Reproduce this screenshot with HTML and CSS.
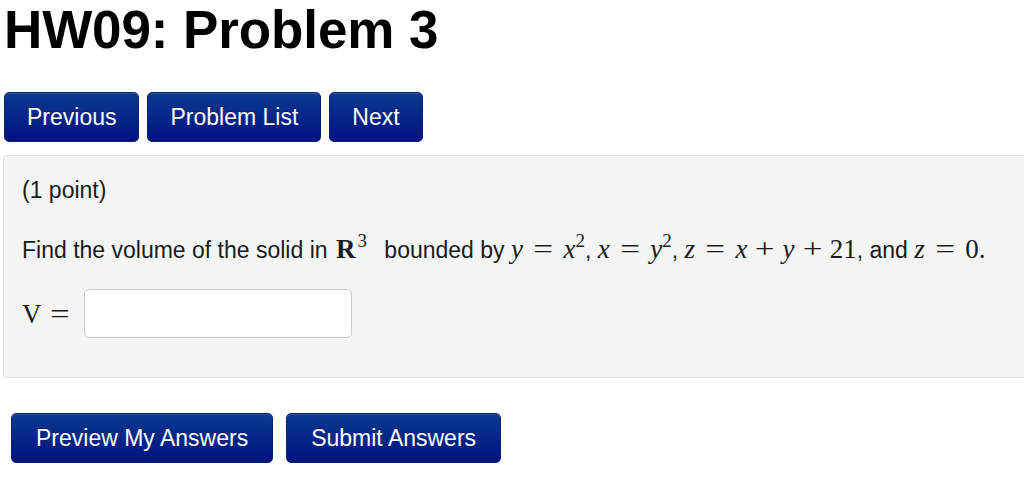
FILE: index.html
```html
<!DOCTYPE html>
<html>
<head>
<meta charset="utf-8">
<link rel="stylesheet" href="styles.css">
</head>
<body>
<div class="page">
  <h1 class="title">HW09: Problem 3</h1>
  <div class="nav">
    <span class="btn">Previous</span>
    <span class="btn">Problem List</span>
    <span class="btn">Next</span>
  </div>
  <div class="problem">
    <p class="points">(1 point)</p>
    <p class="question">Find the volume of the solid in <span class="m rr"><b class="bb">R</b><sup>3</sup></span> bounded by <span class="m"><i>y</i><span class="rel">=</span><i>x</i><sup>2</sup></span>, <span class="m"><i>x</i><span class="rel">=</span><i>y</i><sup>2</sup></span>, <span class="m"><i>z</i><span class="rel">=</span><i>x</i><span class="bin">+</span><i>y</i><span class="bin">+</span>21</span>, and <span class="m"><i>z</i><span class="rel">=</span>0.</span></p>
    <div class="answer">
      <span class="m label">V<span class="rel">=</span></span>
      <span class="input"></span>
    </div>
  </div>
  <div class="submit">
    <span class="btn wide">Preview My Answers</span>
    <span class="btn wide">Submit Answers</span>
  </div>
</div>
</body>
</html>
```
FILE: styles.css
```css
html, body {
  margin: 0;
  padding: 0;
  background: #fff;
}
.page {
  padding-left: 3px;
  font-family: "Liberation Sans", Arial, sans-serif;
  color: #1a1a1a;
}
.title {
  margin: 0;
  font-size: 53px;
  line-height: 60px;
  font-weight: bold;
  letter-spacing: -0.1px;
  color: #000;
  padding-left: 1px;
}
.nav {
  display: flex;
  gap: 8px;
  margin-top: 32px;
  padding-left: 1px;
}
.btn {
  display: inline-flex;
  align-items: center;
  height: 48px;
  padding: 0 22px;
  font-size: 23px;
  color: #fff;
  background: linear-gradient(#0b3b8f, #001181);
  border: 1px solid #0a2070;
  border-radius: 5px;
  text-shadow: 0 -1px 0 rgba(0,0,0,0.25);
  box-shadow: inset 0 1px 0 rgba(255,255,255,0.15);
}
.problem {
  margin-top: 13px;
  margin-right: -10px;
  background: #f5f5f5;
  border: 1px solid #e3e3e3;
  border-radius: 4px;
  padding: 19px 18px 39px;
  font-size: 23px;
}
.points {
  margin: 0;
  line-height: 30px;
}
.question {
  margin: 30px 0 0;
  line-height: 30px;
}
.m {
  font-family: "Liberation Serif", "Times New Roman", serif;
  font-size: 27px;
  line-height: 20px;
  white-space: nowrap;
}
.m i {
  font-style: italic;
}
.m sup {
  font-size: 19px;
  line-height: 0;
  vertical-align: 11px;
}
.rr {
  margin: 0 11px 0 2px;
}
.bb {
  font-weight: bold;
  padding-right: 2px;
}
.rel {
  display: inline-block;
  width: 1.5em;
  text-align: center;
  transform: scaleX(1.3);
}
.bin {
  display: inline-block;
  width: 1.3em;
  text-align: center;
  transform: scaleX(1.3);
}
.answer {
  display: flex;
  align-items: center;
  margin-top: 24px;
  gap: 6px;
}
.label {
  line-height: 30px;
}
.label .rel {
  width: 1.334em;
}
.input {
  display: block;
  width: 266px;
  height: 47px;
  background: #fff;
  border: 1px solid #ccc;
  border-radius: 5px;
}
.submit {
  display: flex;
  gap: 13px;
  margin-top: 35px;
  padding-left: 8px;
}
.wide {
  padding: 0 24px;
}
```
